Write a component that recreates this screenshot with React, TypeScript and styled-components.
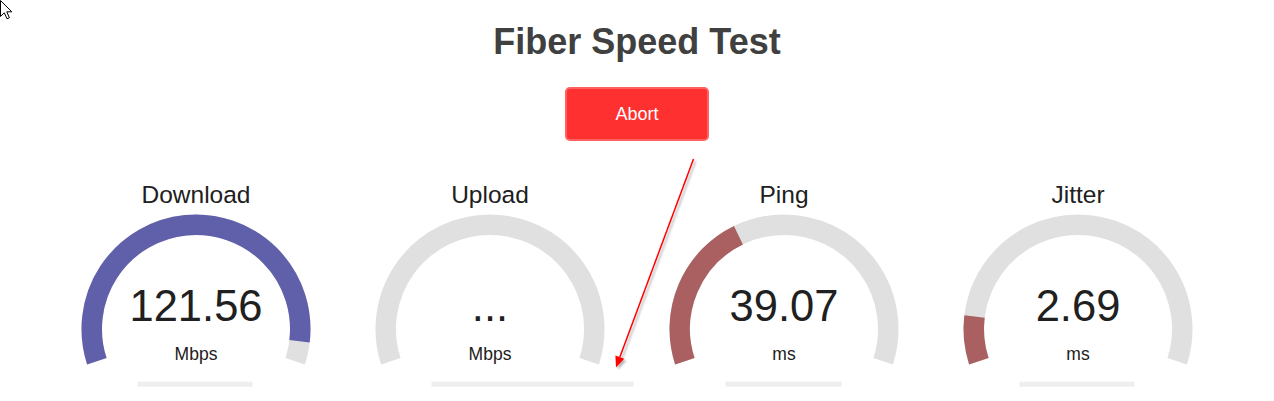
import styled, { createGlobalStyle } from 'styled-components'

const GlobalStyle = createGlobalStyle`
  html, body {
    margin: 0;
    padding: 0;
    background: #ffffff;
  }
  body {
    font-family: 'Liberation Sans', Arial, sans-serif;
    color: #202020;
  }
`

const Page = styled.main`
  position: relative;
  width: 1274px;
  height: 401px;
  overflow: hidden;
  display: flex;
  flex-direction: column;
  align-items: center;
`

const Title = styled.h1`
  margin: 24px 0 0 0;
  font-size: 36px;
  line-height: 36px;
  font-weight: 700;
  color: #404040;
`

const StopButton = styled.button`
  box-sizing: border-box;
  margin-top: 27px;
  width: 144px;
  height: 54px;
  display: flex;
  align-items: center;
  justify-content: center;
  background: #ff3030;
  border: 2px solid #ff6060;
  border-radius: 5px;
  color: #ffffff;
  font-family: 'Liberation Sans', Arial, sans-serif;
  font-size: 18px;
  line-height: 18px;
  padding: 0;
`

const Tests = styled.section`
  margin-top: 42px;
  display: grid;
  grid-template-columns: repeat(4, 294px);
`

const TestArea = styled.div`
  display: flex;
  flex-direction: column;
  align-items: center;
`

const TestName = styled.div`
  height: 22px;
  font-size: 24.5px;
  line-height: 23px;
  color: #202020;
`

const Dial = styled.div`
  display: grid;
  width: 294px;
  height: 190px;
  & > * {
    grid-area: 1 / 1;
  }
`

const Meter = styled.svg`
  display: block;
`

const Readout = styled.div`
  align-self: start;
  display: flex;
  flex-direction: column;
  align-items: center;
  padding-top: 80px;
`

const Value = styled.div`
  font-size: 43.5px;
  line-height: 43px;
  color: #202020;
`

const Unit = styled.div`
  margin-top: 17.5px;
  font-size: 17.5px;
  line-height: 17.5px;
  color: #202020;
`

const Overlay = styled.svg`
  position: absolute;
  left: 0;
  top: 0;
  pointer-events: none;
`

const CX = 147
const CY = 124
const R = 104.25
const START = -198
const SWEEP = 216

const polar = (deg: number) => {
  const a = (deg * Math.PI) / 180
  return [CX + R * Math.cos(a), CY + R * Math.sin(a)]
}

const arc = (from: number, to: number) => {
  const [x0, y0] = polar(from)
  const [x1, y1] = polar(to)
  const large = to - from > 180 ? 1 : 0
  return `M ${x0} ${y0} A ${R} ${R} 0 ${large} 1 ${x1} ${y1}`
}

const tests = [
  { label: 'Download', value: '121.56', unit: 'Mbps', amount: 0.948, color: '#6060AA', progress: 115 },
  { label: 'Upload', value: '...', unit: 'Mbps', amount: 0, color: '#616161', progress: 202 },
  { label: 'Ping', value: '39.07', unit: 'ms', amount: 0.38, color: '#AA6060', progress: 116 },
  { label: 'Jitter', value: '2.69', unit: 'ms', amount: 0.115, color: '#AA6060', progress: 115 },
]

const App = () => {
  return (
    <Page>
      <GlobalStyle />
      <Title>Fiber Speed Test</Title>
      <StopButton>Abort</StopButton>
      <Tests>
        {tests.map((t) => (
          <TestArea key={t.label}>
            <TestName>{t.label}</TestName>
            <Dial>
              <Meter width="294" height="190" viewBox="0 0 294 190">
                <path d={arc(START, START + SWEEP)} fill="none" stroke="#E0E0E0" strokeWidth="20.5" />
                {t.amount > 0 && (
                  <path d={arc(START, START + t.amount * SWEEP)} fill="none" stroke={t.color} strokeWidth="20.5" />
                )}
                <rect x="88.5" y="176.7" width={t.progress} height="5" fill="#EEEEEE" />
              </Meter>
              <Readout>
                <Value>{t.value}</Value>
                <Unit>{t.unit}</Unit>
              </Readout>
            </Dial>
          </TestArea>
        ))}
      </Tests>

      <Overlay width="1274" height="401" viewBox="0 0 1274 401">
        <defs>
          <filter id="shade" x="-20%" y="-20%" width="140%" height="140%">
            <feDropShadow dx="2" dy="2" stdDeviation="1.2" floodColor="#000" floodOpacity="0.3" />
          </filter>
        </defs>
        <g filter="url(#shade)">
          <line x1="693.5" y1="159" x2="619.8" y2="357.2" stroke="#ff0000" strokeWidth="1.5" />
          <polygon points="616,367.5 624.2,358.8 615.4,355.6" fill="#ff0000" />
        </g>
        <path
          d="M0.5 0.5 L0.5 16.5 L4.3 12.8 L7 18.8 L9.4 17.8 L6.8 11.8 L11.8 11.8 Z"
          fill="#ffffff"
          stroke="#000000"
          strokeWidth="1"
          strokeLinejoin="miter"
        />
      </Overlay>
    </Page>
  )
}

export default App
